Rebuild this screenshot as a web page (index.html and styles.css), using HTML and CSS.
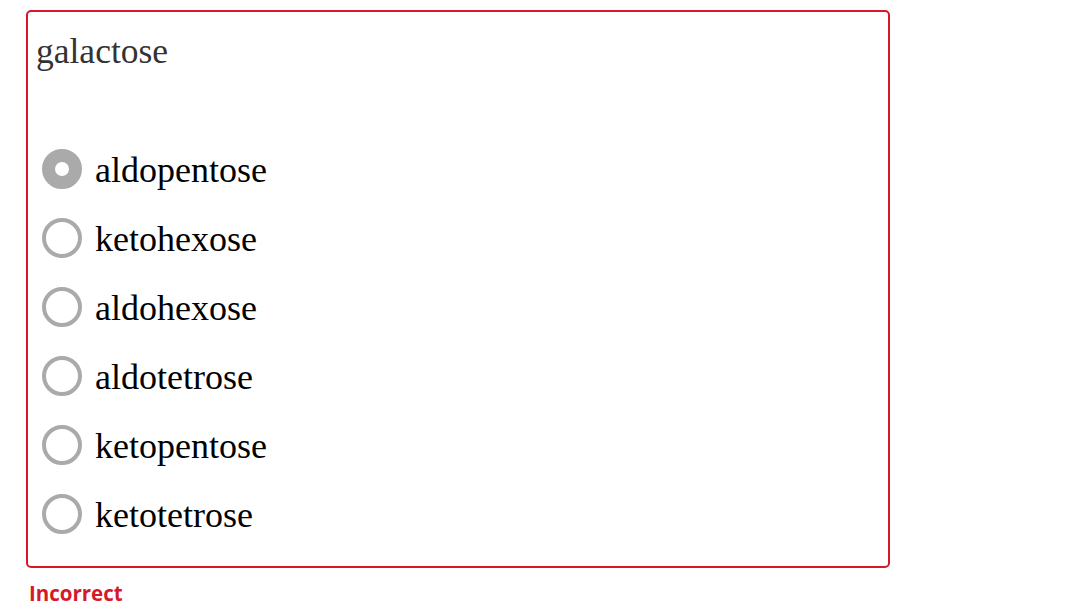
FILE: index.html
```html
<!DOCTYPE html>
<html>
<head>
<meta charset="utf-8">
<link rel="stylesheet" href="styles.css">
</head>
<body>
<div class="page">
  <div class="question">
    <div class="prompt">galactose</div>
    <div class="options">
      <label class="option"><span class="radio checked"></span><span class="label">aldopentose</span></label>
      <label class="option"><span class="radio"></span><span class="label">ketohexose</span></label>
      <label class="option"><span class="radio"></span><span class="label">aldohexose</span></label>
      <label class="option"><span class="radio"></span><span class="label">aldotetrose</span></label>
      <label class="option"><span class="radio"></span><span class="label">ketopentose</span></label>
      <label class="option"><span class="radio"></span><span class="label">ketotetrose</span></label>
    </div>
  </div>
  <div class="feedback">Incorrect</div>
</div>
</body>
</html>
```

FILE: styles.css
```css
html, body {
  margin: 0;
  padding: 0;
  background: #ffffff;
}

.page {
  padding: 10px 0 0 26px;
  font-family: "Liberation Serif", "Times New Roman", serif;
}

.question {
  box-sizing: border-box;
  width: 864px;
  height: 558px;
  border: 2px solid #d6182a;
  border-radius: 5px;
  padding: 19px 8px 0 8px;
}

.prompt {
  font-size: 35.5px;
  line-height: 40px;
  color: #333333;
}

.options {
  margin-top: 63px;
  padding-left: 6px;
  display: flex;
  flex-direction: column;
}

.option {
  display: flex;
  align-items: center;
  height: 69px;
}

.radio {
  box-sizing: border-box;
  width: 40px;
  height: 40px;
  border-radius: 50%;
  border: 4px solid #aaaaaa;
  background: #ffffff;
  flex: none;
  display: flex;
  align-items: center;
  justify-content: center;
}

.radio.checked {
  background: #aaaaaa;
}

.radio.checked::after {
  content: "";
  width: 14px;
  height: 14px;
  border-radius: 50%;
  background: #ffffff;
}

.label {
  margin-left: 13px;
  font-size: 36px;
  line-height: 40px;
  color: #000000;
  position: relative;
  top: 1px;
}

.feedback {
  margin-top: 11px;
  padding-left: 3px;
  font-family: "Open Sans", "Liberation Sans", sans-serif;
  font-weight: 700;
  font-size: 20.5px;
  line-height: 28px;
  color: #d6182a;
}
```
